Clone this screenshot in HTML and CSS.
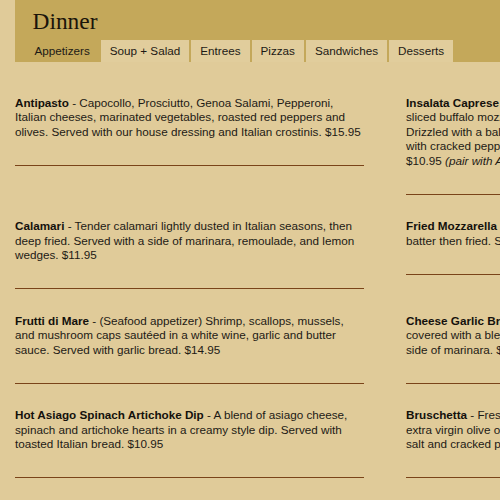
FILE: index.html
```html
<!DOCTYPE html>
<html lang="en">
<head>
    <meta charset="UTF-8">
    <meta name="viewport" content="width=device-width, initial-scale=1.0">
    <title>Dinner Menu</title>
    <link rel="stylesheet" href="styles.css">
</head>
<body>
    <div class="menu">
        <header class="menu-header">
            <h1>Dinner</h1>
            <ul class="tabs">
                <li class="active"><a href="#">Appetizers</a></li>
                <li><a href="#">Soup + Salad</a></li>
                <li><a href="#">Entrees</a></li>
                <li><a href="#">Pizzas</a></li>
                <li><a href="#">Sandwiches</a></li>
                <li><a href="#">Desserts</a></li>
            </ul>
        </header>

        <div class="items">
            <div class="item">
                <p><b>Antipasto</b> - Capocollo, Prosciutto, Genoa Salami, Pepperoni, Italian cheeses, marinated vegetables, roasted red peppers and olives. Served with our house dressing and Italian crostinis. $15.95</p>
                <hr>
            </div>
            <div class="item">
                <p><b>Insalata Caprese</b> - Fresh vine ripened tomatoes layered with sliced buffalo mozzarella and fresh basil leaves from our garden. Drizzled with a balsamic reduction and finished right at the table with cracked pepper and a light splash of extra virgin olive oil. $10.95 <i>(pair with Asti Spumante)</i></p>
                <hr>
            </div>
            <div class="item">
                <p><b>Calamari</b> - Tender calamari lightly dusted in Italian seasons, then deep fried. Served with a side of marinara, remoulade, and lemon wedges. $11.95</p>
                <hr>
            </div>
            <div class="item">
                <p><b>Fried Mozzarella</b> - Mozzarella dipped in our homemade beer batter then fried. Served with a side of marinara. $9.95</p>
                <hr>
            </div>
            <div class="item">
                <p><b>Frutti di Mare</b> - (Seafood appetizer) Shrimp, scallops, mussels, and mushroom caps sautéed in a white wine, garlic and butter sauce. Served with garlic bread. $14.95</p>
                <hr>
            </div>
            <div class="item">
                <p><b>Cheese Garlic Bread</b> - Italian bread brushed with garlic butter, covered with a blend of mozzarella and parmesan. Served with a side of marinara. $7.95</p>
                <hr>
            </div>
            <div class="item">
                <p><b>Hot Asiago Spinach Artichoke Dip</b> - A blend of asiago cheese, spinach and artichoke hearts in a creamy style dip. Served with toasted Italian bread. $10.95</p>
                <hr>
            </div>
            <div class="item">
                <p><b>Bruschetta</b> - Fresh chopped tomatoes, basil and garlic tossed in extra virgin olive oil, served on toasted bread with a pinch of sea salt and cracked pepper. $8.95</p>
                <hr>
            </div>
        </div>
    </div>
</body>
</html>
```

FILE: styles.css
```css
html, body {
    margin: 0;
    padding: 0;
    overflow: hidden;
}

body {
    background-color: #e0cb99;
    color: #1d1a15;
    font-family: "Liberation Sans", Arial, sans-serif;
    font-size: 11.7px;
}

.menu {
    width: 760px;
    margin-left: 15px;
}

/* Gold band with the title and the tabs */
.menu-header {
    background-color: #c4a85a;
    padding: 8px 0 0 10.5px;
}

.menu-header h1 {
    margin: 0 0 0 7px;
    font-family: "Liberation Serif", "Times New Roman", serif;
    font-size: 23.4px;
    font-weight: normal;
    line-height: 26px;
    color: #1a140a;
}

.tabs {
    display: flex;
    list-style: none;
    margin: 6px 0 0;
    padding: 0;
}

.tabs a {
    display: block;
    padding: 4px 9px;
    line-height: 14px;
    color: #1d1a15;
    text-decoration: none;
    background-color: #e1cd9c;
    border-right: 2px solid #c4a85a;
}

.tabs .active a {
    background-color: #c4a85a;
}

/* Menu items, two per row */
.items {
    display: grid;
    grid-template-columns: 349px 349px;
    column-gap: 42px;
    row-gap: 24.5px;
    padding-top: 33.75px;
}

.item p {
    margin: 0 0 25.5px;
    line-height: 14.5px;
}

.item b {
    color: #14110c;
}

.item hr {
    margin: 0;
    height: 0;
    border: 0;
    border-top: 1px solid #7a4419;
}
```
